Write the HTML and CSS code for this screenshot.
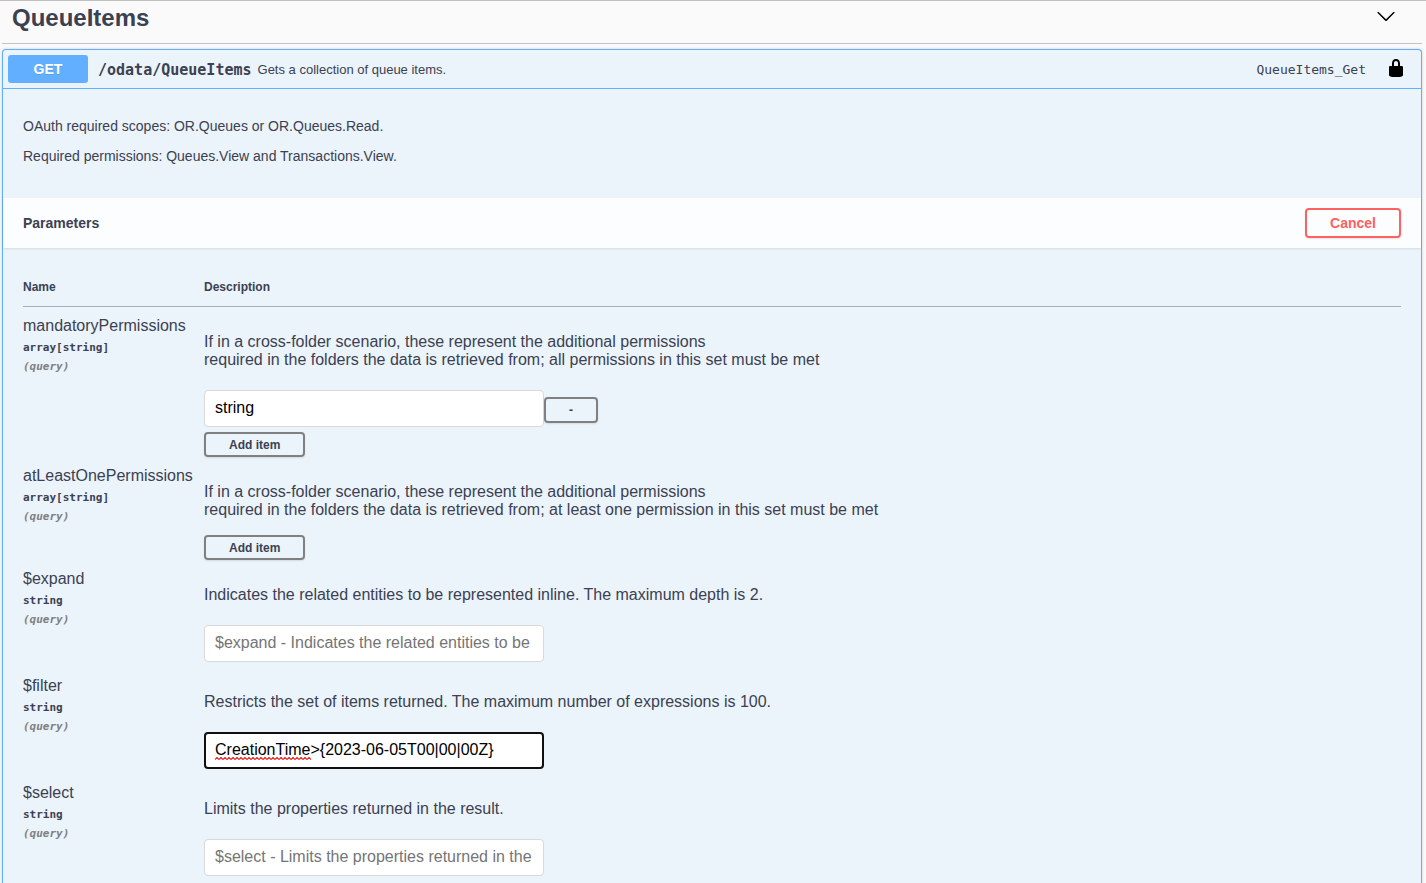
FILE: index.html
```
<!DOCTYPE html>
<html lang="en">
<head>
  <meta charset="UTF-8" />
  <meta name="viewport" content="width=device-width, initial-scale=1.0"/>
  <title>QueueItems</title>
  <link rel="stylesheet" href="styles.css">
</head>
<body>
  <header class="tag">
    <h1>QueueItems</h1>
    <button class="icon-btn" aria-label="Collapse QueueItems">
      <svg width="20" height="20" viewBox="0 0 20 20"><path d="M17.418 6.109c.272-.268.709-.268.979 0s.271.701 0 .969l-7.908 7.83c-.27.268-.707.268-.979 0l-7.908-7.83c-.27-.268-.27-.701 0-.969.271-.268.709-.268.979 0L10 13.25l7.418-7.141z"/></svg>
    </button>
  </header>

  <main class="opblock">
    <div class="summary">
      <span class="method">GET</span>
      <span class="path">/odata/QueueItems</span>
      <span class="summary-text">Gets a collection of queue items.</span>
      <span class="operation-id">QueueItems_Get</span>
      <button class="icon-btn" aria-label="Authorize">
        <svg width="20" height="20" viewBox="0 0 20 20"><path d="M15.8 8H14V5.6C14 2.703 12.665 1 10 1 7.334 1 6 2.703 6 5.6V8H4c-.553 0-1 .646-1 1.199V17c0 .549.428 1.139.951 1.307l1.197.387C5.672 18.861 6.55 19 7.1 19h5.8c.549 0 1.428-.139 1.951-.307l1.196-.387c.524-.167.953-.757.953-1.306V9.199C17 8.646 16.352 8 15.8 8zM12 8H8V5.199C8 3.754 8.797 3 10 3c1.203 0 2 .754 2 2.199V8z"/></svg>
      </button>
    </div>

    <div class="description">
      <p>OAuth required scopes: OR.Queues or OR.Queues.Read.</p>
      <p>Required permissions: Queues.View and Transactions.View.</p>
    </div>

    <div class="section-header">
      <h2>Parameters</h2>
      <button class="btn cancel">Cancel</button>
    </div>

    <div class="table-container">
      <table>
        <thead>
          <tr><th class="col-name">Name</th><th>Description</th></tr>
        </thead>
        <tbody>
          <tr>
            <td>
              <label class="name" for="mandatory">mandatoryPermissions</label>
              <div class="type">array[string]</div>
              <div class="in">(query)</div>
            </td>
            <td>
              <p>If in a cross-folder scenario, these represent the additional permissions<br>required in the folders the data is retrieved from; all permissions in this set must be met</p>
              <div class="field">
                <input type="text" id="mandatory" value="string">
                <button class="btn small remove">-</button>
              </div>
              <button class="btn small add">Add item</button>
            </td>
          </tr>
          <tr>
            <td>
              <div class="name">atLeastOnePermissions</div>
              <div class="type">array[string]</div>
              <div class="in">(query)</div>
            </td>
            <td>
              <p>If in a cross-folder scenario, these represent the additional permissions<br>required in the folders the data is retrieved from; at least one permission in this set must be met</p>
              <button class="btn small add">Add item</button>
            </td>
          </tr>
          <tr>
            <td>
              <label class="name" for="expand">$expand</label>
              <div class="type">string</div>
              <div class="in">(query)</div>
            </td>
            <td>
              <p>Indicates the related entities to be represented inline. The maximum depth is 2.</p>
              <div class="field">
                <input type="text" id="expand" placeholder="$expand - Indicates the related entities to be represented inline. The maximum depth is 2.">
              </div>
            </td>
          </tr>
          <tr>
            <td>
              <label class="name" for="filter">$filter</label>
              <div class="type">string</div>
              <div class="in">(query)</div>
            </td>
            <td>
              <p>Restricts the set of items returned. The maximum number of expressions is 100.</p>
              <div class="field">
                <input type="text" id="filter" class="active" value="CreationTime&gt;{2023-06-05T00|00|00Z}" spellcheck="false">
                <svg class="squiggle" width="96" height="3">
                  <defs>
                    <pattern id="wave" width="4" height="3" patternUnits="userSpaceOnUse">
                      <path d="M0 2.5L2 .5L4 2.5" fill="none" stroke="#f01818" stroke-width="1.2"/>
                    </pattern>
                  </defs>
                  <rect width="96" height="3" fill="url(#wave)"/>
                </svg>
              </div>
            </td>
          </tr>
          <tr>
            <td>
              <label class="name" for="select">$select</label>
              <div class="type">string</div>
              <div class="in">(query)</div>
            </td>
            <td>
              <p>Limits the properties returned in the result.</p>
              <div class="field">
                <input type="text" id="select" placeholder="$select - Limits the properties returned in the result.">
              </div>
            </td>
          </tr>
        </tbody>
      </table>
    </div>
  </main>
</body>
</html>
```
FILE: styles.css
```
:root {
  --text: #3b4151;
  --blue: #61affe;
  --red: #ff6060;
  --sans: "Liberation Sans", Arial, sans-serif;
  --mono: "DejaVu Sans Mono", Consolas, monospace;
}
* {
  box-sizing: border-box;
}
body {
  display: flex;
  flex-direction: column;
  min-height: 100vh;
  margin: 0;
  padding: 0 4px 0 2px;
  border-top: 1px solid #c0c0c0;
  background: #fafafa;
  color: var(--text);
  font-family: var(--sans);
}
h1, h2, p {
  margin: 0;
}
.tag {
  display: flex;
  align-items: center;
  justify-content: space-between;
  padding: 1px 26px 10px 10px;
  border-bottom: 1px solid #c0c2c5;
  margin-bottom: 5px;
}
h1 {
  font-size: 24px;
  line-height: 31px;
}
.icon-btn {
  display: flex;
  padding: 0 0 3px;
  border: none;
  background: none;
  cursor: pointer;
}
.opblock {
  flex: 1;
  border: 1px solid var(--blue);
  border-bottom: none;
  border-radius: 4px 4px 0 0;
  background: #ebf3fb;
  box-shadow: 0 0 3px rgba(0,0,0,0.19);
}
.summary {
  display: flex;
  align-items: center;
  padding: 5px 15px 5px 5px;
  border-bottom: 1px solid var(--blue);
}
.method {
  width: 80px;
  border-radius: 3px;
  background: var(--blue);
  color: #fff;
  font-size: 14px;
  font-weight: bold;
  line-height: 28px;
  text-align: center;
  text-shadow: 0 1px 0 rgba(0,0,0,0.1);
}
.path {
  padding: 2px 6px 0 10px;
  font-family: var(--mono);
  font-size: 15px;
  font-weight: bold;
}
.summary-text {
  flex: 1;
  font-size: 13px;
}
.operation-id {
  margin-right: 20px;
  font-family: var(--mono);
  font-size: 13px;
}
.description {
  display: flex;
  flex-direction: column;
  gap: 12px;
  padding: 28px 20px 33px;
  font-size: 14px;
  line-height: 18px;
}
.section-header {
  display: flex;
  align-items: center;
  justify-content: space-between;
  padding: 10px 20px;
  background: rgba(255,255,255,0.8);
  box-shadow: 0 1px 2px rgba(0,0,0,0.1);
}
h2 {
  font-size: 14px;
}
.btn {
  padding: 0 23px;
  border: 2px solid gray;
  border-radius: 4px;
  background: transparent;
  box-shadow: 0 1px 2px rgba(0,0,0,0.1);
  color: var(--text);
  font-family: var(--sans);
  font-size: 14px;
  font-weight: bold;
  cursor: pointer;
}
.cancel {
  height: 30px;
  border-color: var(--red);
  color: var(--red);
}
.small {
  font-size: 12px;
}
.add {
  display: block;
  height: 25px;
}
.remove {
  height: 26px;
  margin-bottom: 4px;
}
.table-container {
  padding: 20px;
}
table {
  width: 100%;
  border-spacing: 0;
}
th {
  padding: 11px 0;
  border-bottom: 1px solid #a5b0bd;
  font-size: 12px;
  line-height: 16px;
  text-align: left;
}
.col-name {
  width: 181px;
}
td {
  padding: 0;
  vertical-align: top;
}
td p {
  padding: 26px 0 16px;
  line-height: 18px;
}
.name {
  display: block;
  padding-top: 11px;
  line-height: 16px;
}
.type, .in {
  font-family: var(--mono);
  font-size: 11px;
  font-weight: bold;
  line-height: 19px;
}
.type {
  padding-top: 4px;
}
.in {
  color: gray;
  font-style: italic;
}
.field {
  display: flex;
  align-items: flex-end;
  position: relative;
  padding: 5px 0;
}
input {
  width: 340px;
  height: 37px;
  padding: 0 10px 2px;
  border: 1px solid #d9d9d9;
  border-radius: 4px;
  background: #fff;
  color: #000;
  font-family: var(--sans);
  font-size: 16px;
}
input::placeholder {
  color: #757575;
}
input.active {
  padding: 0 9px 2px;
  border: 2px solid #101010;
  outline: none;
}
.squiggle {
  position: absolute;
  left: 11px;
  top: 30px;
}
```
